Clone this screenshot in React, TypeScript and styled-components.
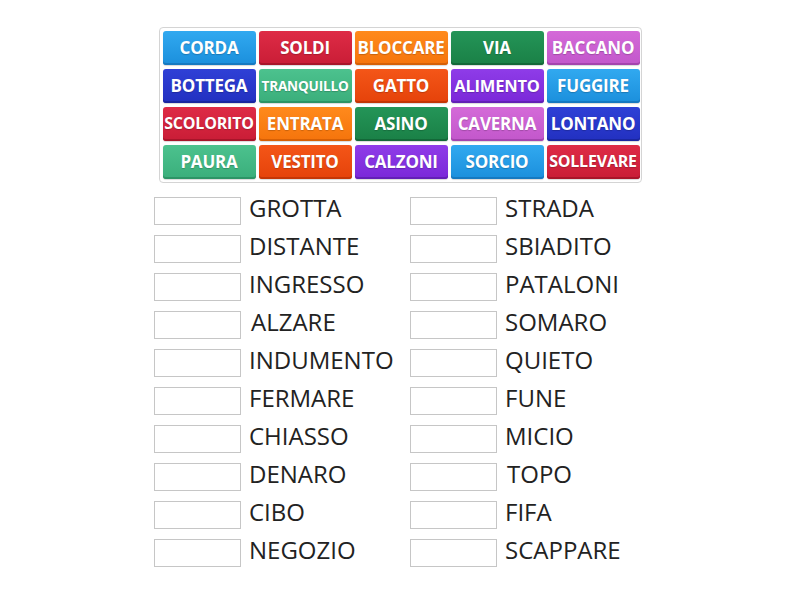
import React from "react";
import styled, { createGlobalStyle } from "styled-components";

const Global = createGlobalStyle`
  html, body { margin: 0; padding: 0; background: #ffffff; }
  body { font-family: "Open Sans", "Noto Sans", sans-serif; }
`;

const Page = styled.div`
  width: 800px;
  height: 600px;
  padding-top: 27px;
  box-sizing: border-box;
  display: flex;
  flex-direction: column;
`;

const Bank = styled.div`
  align-self: center;
  width: 483px;
  box-sizing: border-box;
  border: 1px solid #d4d4d4;
  border-radius: 4px;
  padding: 3px;
  display: grid;
  grid-template-columns: repeat(5, 93px);
  grid-auto-rows: 34px;
  column-gap: 3px;
  row-gap: 4px;
`;

type Pal = { top: string; bottom: string; edge: string };

const palettes: Record<string, Pal> = {
  blue: { top: "#31a9f0", bottom: "#1b8fdc", edge: "#1679c0" },
  red: { top: "#de2b46", bottom: "#c91d36", edge: "#a8152a" },
  orange: { top: "#ff8a1c", bottom: "#f5740c", edge: "#d66006" },
  green: { top: "#249558", bottom: "#1a8046", edge: "#136838" },
  pink: { top: "#d46ad8", bottom: "#c257cb", edge: "#a444ae" },
  navy: { top: "#2f40d6", bottom: "#2230c0", edge: "#1a26a0" },
  teal: { top: "#4cc28e", bottom: "#3aae7b", edge: "#2d9466" },
  redorange: { top: "#f45618", bottom: "#e5420a", edge: "#c43606" },
  purple: { top: "#8f3ce8", bottom: "#7a28d8", edge: "#6320b6" },
};

const Tile = styled.div<{ $c: Pal; $size: number }>`
  display: flex;
  align-items: center;
  justify-content: center;
  border-radius: 3px;
  background: linear-gradient(to bottom, ${(p) => p.$c.top}, ${(p) => p.$c.bottom});
  box-shadow: inset 0 -2px 0 ${(p) => p.$c.edge}, 0 1px 1px rgba(0, 0, 0, 0.15);
  color: #ffffff;
  font-family: "Open Sans", sans-serif;
  font-weight: 700;
  font-size: ${(p) => p.$size}px;
  letter-spacing: -0.2px;
  white-space: nowrap;
  padding-bottom: 2px;
  box-sizing: border-box;
  text-shadow: 0 1px 1px rgba(0, 0, 0, 0.2);
`;

const Answers = styled.div`
  margin-top: 14px;
  padding-left: 154px;
  display: grid;
  grid-template-columns: 256px 256px;
  grid-auto-rows: 28px;
  row-gap: 10px;
`;

const Item = styled.div`
  display: flex;
  align-items: center;
  gap: 8px;
`;

const Slot = styled.div`
  width: 87px;
  height: 28px;
  box-sizing: border-box;
  border: 1px solid #c6c6c6;
  background: #ffffff;
  flex: none;
`;

const Label = styled.span<{ $shift: number }>`
  font-family: "Open Sans", sans-serif;
  font-size: 24px;
  color: #222222;
  white-space: nowrap;
  line-height: 28px;
  margin-top: -6px;
  margin-left: ${(p) => p.$shift}px;
`;

const order = ["blue", "red", "orange", "green", "pink", "navy", "teal", "redorange", "purple"];

const words = [
  "CORDA", "SOLDI", "BLOCCARE", "VIA", "BACCANO",
  "BOTTEGA", "TRANQUILLO", "GATTO", "ALIMENTO", "FUGGIRE",
  "SCOLORITO", "ENTRATA", "ASINO", "CAVERNA", "LONTANO",
  "PAURA", "VESTITO", "CALZONI", "SORCIO", "SOLLEVARE",
];

const sizes: Record<string, number> = {
  TRANQUILLO: 13.6,
  SCOLORITO: 16,
  SOLLEVARE: 16,
  ALIMENTO: 16.5,
};

const left = ["GROTTA", "DISTANTE", "INGRESSO", "ALZARE", "INDUMENTO", "FERMARE", "CHIASSO", "DENARO", "CIBO", "NEGOZIO"];
const right = ["STRADA", "SBIADITO", "PATALONI", "SOMARO", "QUIETO", "FUNE", "MICIO", "TOPO", "FIFA", "SCAPPARE"];
const shifted = new Set(["ALZARE", "TOPO"]);

export default function App() {
  const rows: [string, string][] = left.map((l, i) => [l, right[i]]);
  return (
    <>
      <Global />
      <Page>
        <Bank>
          {words.map((w, i) => (
            <Tile key={w} $c={palettes[order[i % 9]]} $size={sizes[w] ?? 17}>
              {w}
            </Tile>
          ))}
        </Bank>
        <Answers>
          {rows.map(([l, r]) => (
            <React.Fragment key={l}>
              <Item>
                <Slot />
                <Label $shift={shifted.has(l) ? 2 : 0}>{l}</Label>
              </Item>
              <Item>
                <Slot />
                <Label $shift={shifted.has(r) ? 2 : 0}>{r}</Label>
              </Item>
            </React.Fragment>
          ))}
        </Answers>
      </Page>
    </>
  );
}
